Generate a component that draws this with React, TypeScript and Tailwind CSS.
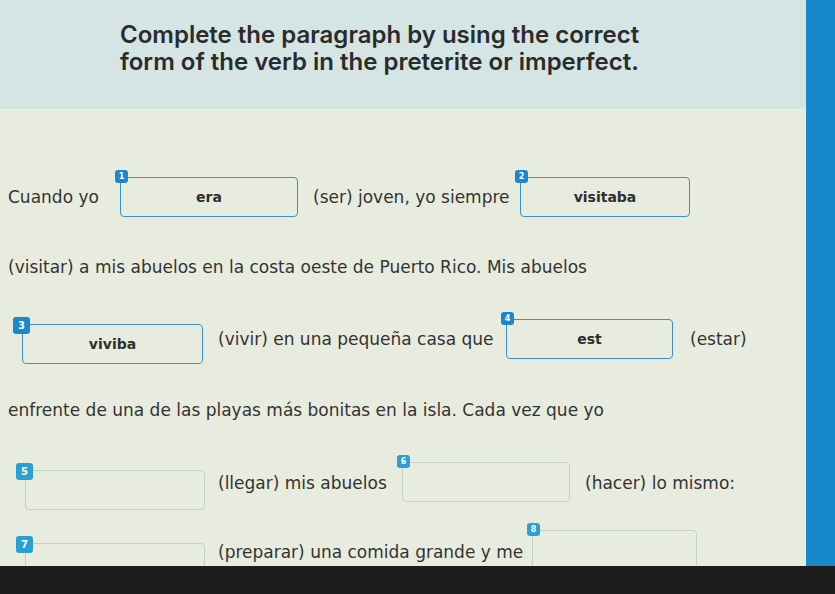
type BlankProps = {
  n: number;
  value?: string;
  width: string;
  faded?: boolean;
  big?: boolean;
  className?: string;
};

function Blank({ n, value = '', width, faded = false, big = false, className = '' }: BlankProps) {
  return (
    <div
      className={`relative flex h-[40px] shrink-0 items-center justify-center rounded-[4px] border-[1.5px] ${
        faded ? 'border-[#c3cfc9]' : 'border-[#3f8fcf]'
      } ${width} ${className}`}
    >
      {/* Number badge */}
      <span
        className={`absolute flex items-center justify-center rounded-[3px] font-bold text-white ${
          faded ? 'bg-[#2aa0d2]' : 'bg-[#1a87d0]'
        } ${
          big
            ? '-left-[10px] -top-[8px] size-[17px] text-[10px]'
            : '-left-[6px] -top-[8px] size-[13px] text-[8px]'
        }`}
      >
        {n}
      </span>
      <span className="text-[14px] font-bold text-[#2e2e2e]">{value}</span>
    </div>
  );
}

export default function App() {
  return (
    <div
      className="flex h-[594px] w-[835px] flex-col overflow-hidden bg-[#1d1d1d] text-[#333]"
      style={{ fontFamily: '"DejaVu Sans", "Liberation Sans", sans-serif' }}
    >
      <div className="flex h-[566px] shrink-0">
        <div className="flex flex-1 flex-col overflow-hidden bg-[#e8ecdf]">
          {/* Header */}
          <header className="h-[110px] shrink-0 border-b border-[#e9efe6] bg-[#d4e5e4] pl-[120px] pt-[21px]">
            <h1
              className="text-[24px] font-semibold leading-[27px] text-[#2b2b2b]"
              style={{ fontFamily: 'Inter, "Liberation Sans", sans-serif' }}
            >
              Complete the paragraph by using the correct
              <br />
              form of the verb in the preterite or imperfect.
            </h1>
          </header>

          <div className="pl-2 text-[17px] leading-[24px]">
            {/* Row 1 */}
            <div className="mt-[67px] flex items-center">
              <span className="w-[112px] shrink-0">Cuando yo</span>
              <Blank n={1} value="era" width="w-[178px]" />
              <span className="w-[222px] shrink-0 pl-[15px]">(ser) joven, yo siempre</span>
              <Blank n={2} value="visitaba" width="w-[170px]" />
            </div>

            <p className="mt-[38px]">
              (visitar) a mis abuelos en la costa oeste de Puerto Rico. Mis abuelos
            </p>

            {/* Row 3 */}
            <div className="mt-[40px] flex items-start">
              <Blank n={3} value="viviba" width="ml-[14px] w-[181px]" className="mt-[5px]" big />
              <span className="mt-[8px] w-[303px] shrink-0 pl-[15px]">
                (vivir) en una pequeña casa que
              </span>
              <Blank n={4} value="est" width="w-[167px]" />
              <span className="mt-[8px] pl-[17px]">(estar)</span>
            </div>

            <p className="mt-[34px]">
              enfrente de una de las playas más bonitas en la isla. Cada vez que yo
            </p>

            {/* Row 5 */}
            <div className="mt-[40px] flex items-start">
              <Blank n={5} width="ml-[17px] w-[180px]" className="mt-[8px]" faded big />
              <span className="mt-[9px] w-[197px] shrink-0 pl-[13px]">(llegar) mis abuelos</span>
              <Blank n={6} width="w-[168px]" faded />
              <span className="mt-[9px] pl-[15px]">(hacer) lo mismo:</span>
            </div>

            {/* Row 7 */}
            <div className="mt-[20px] flex items-start">
              <Blank n={7} width="ml-[17px] w-[180px]" className="mt-[13px]" faded big />
              <span className="mt-[10px] w-[327px] shrink-0 pl-[13px]">
                (preparar) una comida grande y me
              </span>
              <Blank n={8} width="w-[165px]" faded />
            </div>
          </div>
        </div>
        <div className="w-[29px] bg-[#1789cb]" />
      </div>
    </div>
  );
}
